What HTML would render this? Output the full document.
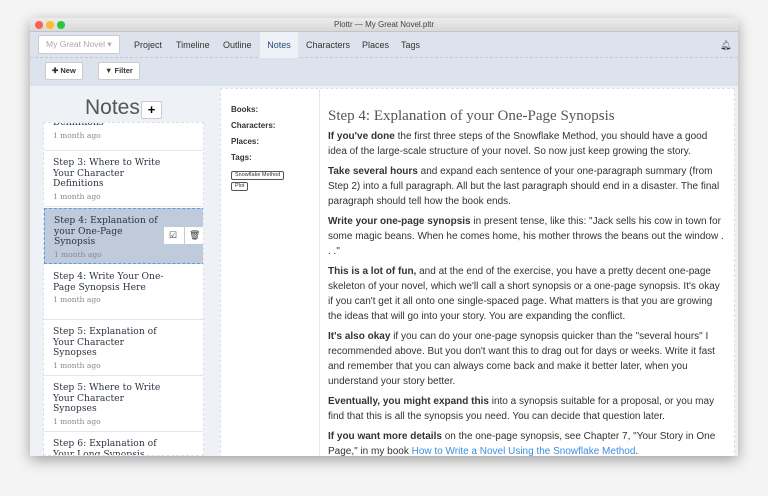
<!DOCTYPE html>
<html><head><meta charset="utf-8"><style>
*{box-sizing:border-box;margin:0;padding:0}
body{width:768px;height:496px;background:#f4f4f4;font-family:"Liberation Sans",sans-serif;position:relative;overflow:hidden}
.win{position:absolute;left:30px;top:18px;width:708px;height:438px;background:#eef1f5;box-shadow:0 4px 14px rgba(0,0,0,.35);border-radius:4px 4px 0 0;overflow:hidden}
.title{height:14px;background:linear-gradient(#ececec,#d9d9d9);border-bottom:1px solid #c4c4c4;text-align:center;font-size:8px;color:#444;line-height:14px;position:relative}
.dot{position:absolute;top:3px;width:8px;height:8px;border-radius:50%}
.nav{height:26px;background:#dde3ec;border-bottom:1px dashed #c4cad4;position:relative;font-size:9px;color:#333}
.nav span{position:absolute;top:0;line-height:26px}
.sel{position:absolute;left:8px;top:3px;width:82px;height:19px;background:#fff;border:1px solid #ccc;border-radius:2px;color:#aaa;font-size:8.5px;line-height:17px;padding-left:7px}
.tb{height:28px;background:#dde3ec;position:relative}
.btn{position:absolute;top:4px;height:18px;background:#fff;border:1px solid #ccc;border-radius:2px;font-size:7.5px;font-weight:bold;color:#333;line-height:16px;padding:0 6px}
.list{position:absolute;left:13px;top:104px;width:161px;height:334px;background:#fff;border:1px dashed #dde;overflow:hidden}
.it{position:absolute;left:0;width:161px;border-bottom:1px solid #e4e6ea;padding:7px 9px 0 9px;font-family:"DejaVu Serif","Liberation Serif",serif;color:#2d3440;font-size:9.2px;line-height:10.6px;white-space:nowrap}
.it i{display:block;font-style:normal;font-size:7.5px;color:#888;margin-top:2px}
.card{position:absolute;left:190px;top:70px;width:515px;height:380px;background:#fff;border:1px dashed #dde}
.meta{position:absolute;left:10px;top:16px;font-size:8px;font-weight:bold;color:#333}
.meta div{height:16px}
.tag{display:inline-block;border:1px solid #555;border-radius:2px;font-size:5.5px;font-weight:normal;padding:0 3px;line-height:7px;margin-top:1px}
.body{position:absolute;left:98px;top:0;width:415px;height:380px;border-left:1px solid #e6e6e6;padding:17px 8px 0 8px;color:#333;font-size:10px;line-height:15px}
.body h2{font-family:"Liberation Serif","DejaVu Serif",serif;font-weight:normal;font-size:15px;color:#555;margin-bottom:3px;line-height:20px}
.body p{margin-bottom:5px}
</style></head><body>
<div class="win">
<div class="title"><div class="dot" style="left:5px;background:#fc5f57"></div><div class="dot" style="left:16px;background:#fdbc2e"></div><div class="dot" style="left:27px;background:#28c840"></div>Plottr — My Great Novel.pltr</div>
<div class="nav"><div class="sel">My Great Novel ▾</div>
<span style="left:104px">Project</span><span style="left:146px">Timeline</span><span style="left:193px">Outline</span>
<span style="left:230px;width:38px;background:#eef1f5;color:#2b4a7a;text-align:center">Notes</span>
<span style="left:276px">Characters</span><span style="left:332px">Places</span><span style="left:371px">Tags</span>
<span style="left:690px">🔔︎</span></div>
<div class="tb"><div class="btn" style="left:15px">✚ New</div><div class="btn" style="left:68px">▼ Filter</div></div>
<div style="position:absolute;left:55px;top:78px;font-size:21px;color:#555">Notes</div>
<div style="position:absolute;left:111px;top:83px;width:21px;height:18px;background:#fff;border:1px solid #ccc;border-radius:2px;text-align:center;font-size:13px;font-weight:bold;line-height:16px">+</div>
<div class="list">
<div class="it" style="top:-12px;height:40px;padding-top:7px">Definitions<i>1 month ago</i></div>
<div class="it" style="top:28px;height:56px">Step 3: Where to Write<br>Your Character<br>Definitions<i>1 month ago</i></div>
<div class="it" style="top:85px;height:56px;background:#bfcadb;border:1px dashed #5b9be8">Step 4: Explanation of<br>your One-Page<br>Synopsis<i>1 month ago</i>
<div style="position:absolute;left:119px;top:18px;width:40px;height:17px;background:#fff;font-family:sans-serif;font-size:9px;line-height:17px;color:#333"><span style="position:absolute;left:5px">☑</span><span style="position:absolute;left:20px;border-left:1px solid #ccc;padding-left:4px">🗑︎</span></div></div>
<div class="it" style="top:142px;height:55px">Step 4: Write Your One-<br>Page Synopsis Here<i>1 month ago</i></div>
<div class="it" style="top:197px;height:56px">Step 5: Explanation of<br>Your Character<br>Synopses<i>1 month ago</i></div>
<div class="it" style="top:253px;height:56px">Step 5: Where to Write<br>Your Character<br>Synopses<i>1 month ago</i></div>
<div class="it" style="top:309px;height:56px">Step 6: Explanation of<br>Your Long Synopsis<i>1 month ago</i></div>
</div>
<div class="card">
<div class="meta"><div>Books:</div><div>Characters:</div><div>Places:</div><div>Tags:</div><span class="tag">Snowflake Method</span><br><span class="tag">Plot</span></div>
<div class="body">
<h2>Step 4: Explanation of your One-Page Synopsis</h2>
<p><b>If you've done</b> the first three steps of the Snowflake Method, you should have a good idea of the large-scale structure of your novel. So now just keep growing the story.</p>
<p><b>Take several hours</b> and expand each sentence of your one-paragraph summary (from Step 2) into a full paragraph. All but the last paragraph should end in a disaster. The final paragraph should tell how the book ends.</p>
<p><b>Write your one-page synopsis</b> in present tense, like this: "Jack sells his cow in town for some magic beans. When he comes home, his mother throws the beans out the window . . ."</p>
<p><b>This is a lot of fun,</b> and at the end of the exercise, you have a pretty decent one-page skeleton of your novel, which we'll call a short synopsis or a one-page synopsis. It's okay if you can't get it all onto one single-spaced page. What matters is that you are growing the ideas that will go into your story. You are expanding the conflict.</p>
<p><b>It's also okay</b> if you can do your one-page synopsis quicker than the "several hours" I recommended above. But you don't want this to drag out for days or weeks. Write it fast and remember that you can always come back and make it better later, when you understand your story better.</p>
<p><b>Eventually, you might expand this</b> into a synopsis suitable for a proposal, or you may find that this is all the synopsis you need. You can decide that question later.</p>
<p><b>If you want more details</b> on the one-page synopsis, see Chapter 7, "Your Story in One Page," in my book <span style="color:#3b8ee0">How to Write a Novel Using the Snowflake Method</span>.</p>
</div></div>
</div>
</body></html>
